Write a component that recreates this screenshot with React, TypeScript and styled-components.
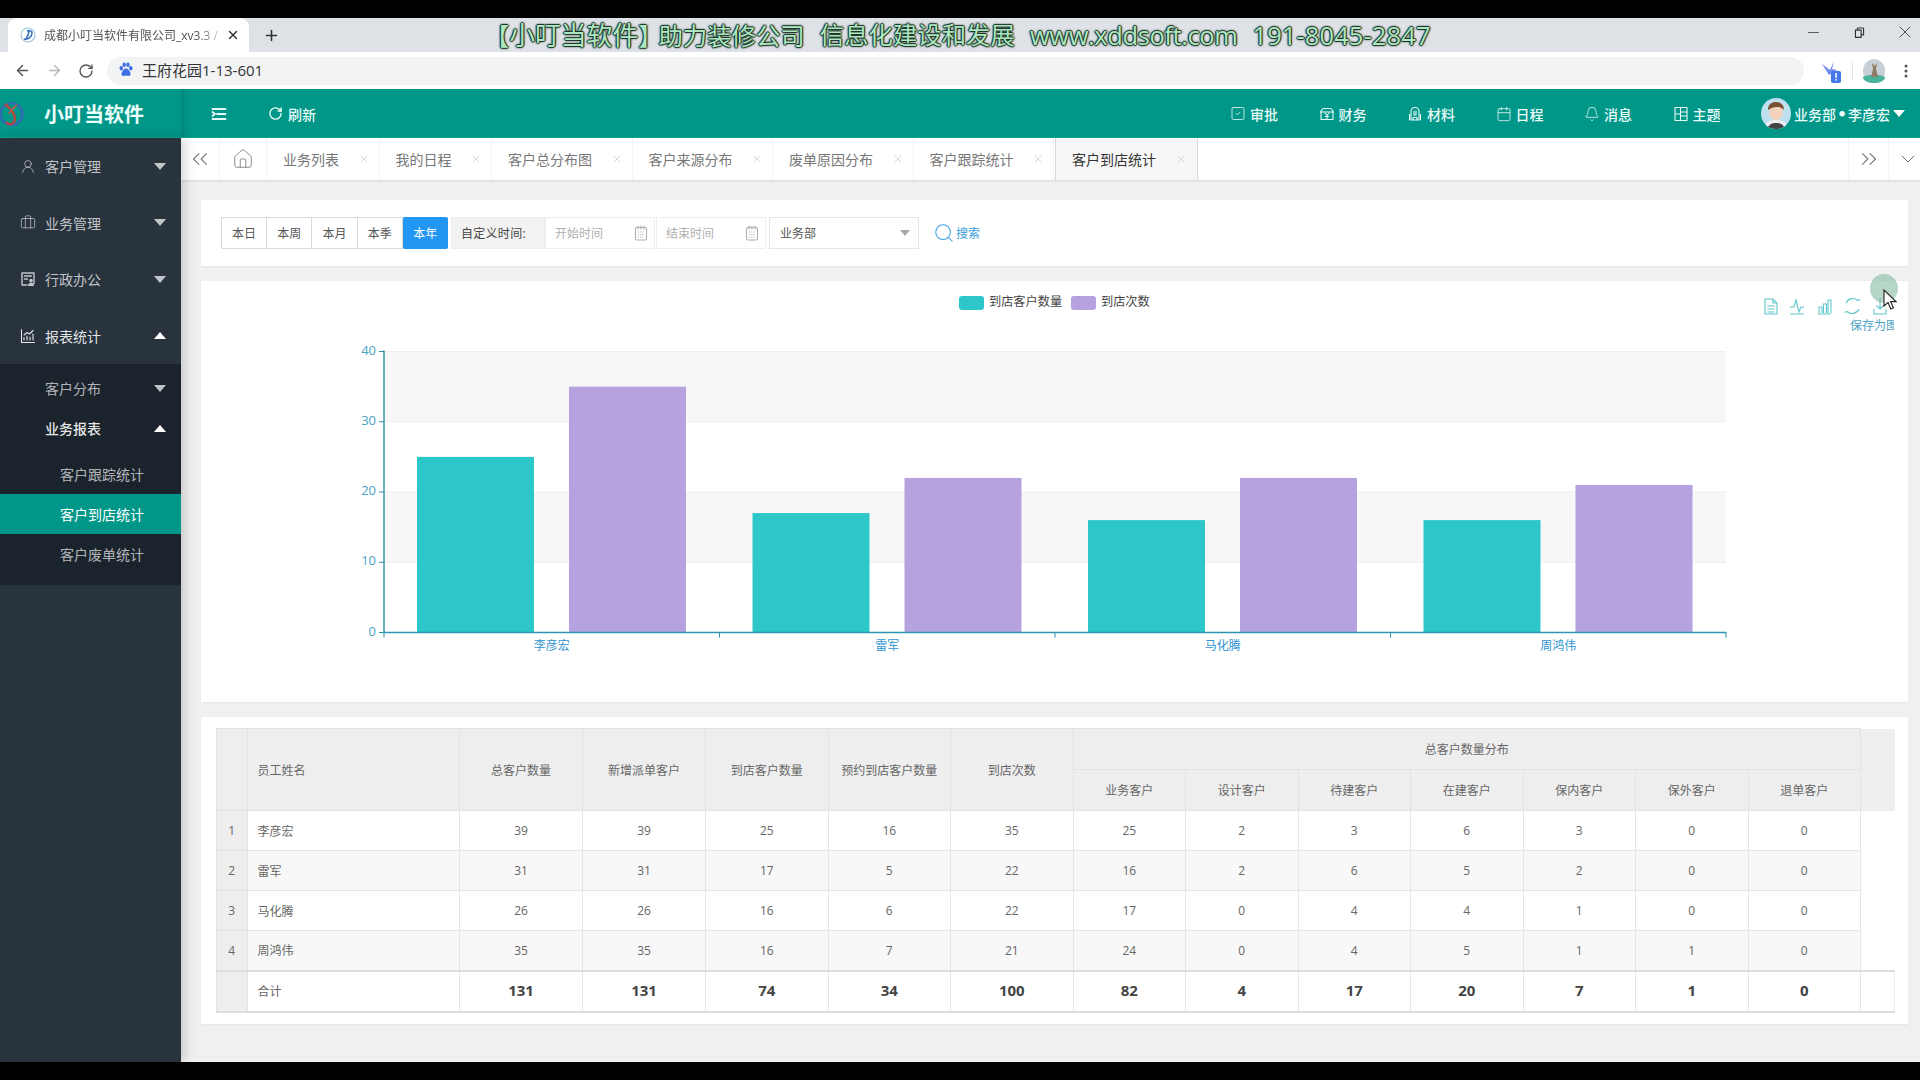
import React from "react";
import styled, { createGlobalStyle } from "styled-components";
import {
  ArrowLeft, ArrowRight, RotateCw, Plus, X, Minus, ChevronsLeft, ChevronsRight, ChevronDown,
  Home, Bell, Calendar, Search, UserRound, Briefcase, SquareCheck,
} from "lucide-react";

const Global = createGlobalStyle`
  html, body { margin: 0; padding: 0; background: #000; }
  body { font-family: "Open Sans", "Noto Sans CJK SC", sans-serif; width: 1920px; height: 1080px; overflow: hidden; }
  * { box-sizing: border-box; }
`;

const Page = styled.div`
  width: 1920px; height: 1080px; padding: 18px 0; background: #000; display: flex; flex-direction: column; overflow: hidden;
`;
const TabStrip = styled.div`
  height: 34px; background: #dee1e6; position: relative; display: flex; align-items: flex-end; padding-left: 8px; flex: none;
`;
const BrowserTab = styled.div`
  width: 241px; height: 34px; background: #fff; border-radius: 9px 9px 0 0; display: flex; align-items: center; padding-left: 12px;
  font-size: 12px; color: #555;
`;
const TabTitle = styled.span`
  width: 176px; margin-left: 8px; white-space: nowrap;
  -webkit-mask-image: linear-gradient(90deg, #000 88%, rgba(0,0,0,.25));
`;
const TabClose = styled.span`
  display: flex; margin-left: 6px; color: #333;
`;
const NewTab = styled.span`
  display: flex; margin-left: 14px; margin-bottom: 8px; color: #333;
`;
const Banner = styled.div`
  position: absolute; left: 497px; top: 2px; display: flex; align-items: center; height: 30px; gap: 15px; white-space: nowrap;
  font-size: 24.4px; line-height: 30px; color: #aee6c2;
  text-shadow: 1px 0 1px #16301f, -1px 0 1px #16301f, 0 1px 1px #16301f, 0 -1px 1px #16301f, 0 0 3px #2b4a38;
`;
const BannerBrand = styled.span`
  font-size: 25.8px;
`;
const BannerBracket = styled.span<{ $after?: boolean }>`
  font-feature-settings: "halt";
  margin-right: ${p => (p.$after ? 8 : 0)}px;
`;
const BannerLatin = styled.span<{ $wide?: boolean }>`
  font-size: 25.5px; font-family: "Open Sans", sans-serif; letter-spacing: ${p => (p.$wide ? "0.1px" : "-0.4px")};
`;
const WindowControls = styled.div`
  position: absolute; right: -8px; top: 6px; display: flex; color: #333;
`;
const WinButton = styled.span`
  width: 46px; height: 16px; display: flex; align-items: center; justify-content: center;
`;
const Toolbar = styled.div`
  height: 37px; background: #fff; display: flex; align-items: center; padding-left: 14px; flex: none; color: #5f6368;
`;
const NavButton = styled.span<{ $dim?: boolean }>`
  width: 32px; display: flex; justify-content: flex-start; color: ${p => (p.$dim ? "#b5b8bd" : "#555")};
`;
const Address = styled.div`
  width: 1697px; height: 28px; border-radius: 14px; background: #f1f3f4; margin-left: -3px; display: flex; align-items: center; gap: 9px; padding: 0 0 2px 12px;
  font-size: 15px; color: #333;
`;
const ToolbarRight = styled.div`
  flex: 1; display: flex; align-items: center; padding-left: 16px; gap: 10px;
`;
const Divider = styled.span`
  width: 1px; height: 20px; background: #e5e5e5;
`;
const MoreWrap = styled.span`
  display: flex; margin-left: 9px;
`;
const Shell = styled.div`
  flex: 1; min-height: 0; display: grid; grid-template-columns: 181px 1fr; grid-template-rows: 49px 1fr; background: #f0f0f0;
`;
const LogoBar = styled.div`
  background: #009688; display: flex; align-items: center; gap: 20px; color: #fff; padding-top: 1px;
  border-bottom: 1px solid #0aa596;
`;
const LogoText = styled.span`
  font-size: 20px; font-weight: 700; white-space: nowrap; color: #eafffb;
`;
const TopBar = styled.div`
  background: #009688; display: flex; align-items: center; color: #e8fbf8; font-size: 14px; padding: 1px 15px 0 30px; font-weight: 500;
  border-bottom: 1px solid #0aa596; box-shadow: inset 8px 0 8px -8px rgba(0,0,0,.18);
`;
const TopLeftItem = styled.span<{ $gap?: number }>`
  display: flex; align-items: center; gap: 5px; margin-right: ${p => p.$gap ?? 0}px;
`;
const TopNav = styled.div`
  margin-left: auto; display: flex; align-items: center; gap: 40.5px;
`;
const TopItem = styled.span`
  display: flex; align-items: center; gap: 4px; white-space: nowrap;
`;
const IconBox = styled.span`
  width: 16px; height: 20px; display: flex; align-items: center; justify-content: center; flex: none;
`;
const UserBox = styled.span`
  display: flex; align-items: center; gap: 3px; white-space: nowrap;
`;
const NameDot = styled.span`
  display: inline-block; width: 6px; text-align: center; font-size: 6px; line-height: 1; vertical-align: 2px;
`;
const CaretBox = styled.span<{ $up?: boolean; $bright?: boolean }>`
  width: 0; height: 0; border-left: 6px solid transparent; border-right: 6px solid transparent;
  ${p => (p.$up ? "border-bottom" : "border-top")}: 7px solid ${p => (p.$bright ? "#fff" : "rgba(255,255,255,.72)")};
  margin-left: auto; flex: none;
`;
const Sidebar = styled.nav`
  background: #28333e; color: rgba(255,255,255,.72); font-size: 14px; position: relative; z-index: 2;
  box-shadow: 4px 0 10px rgba(0,0,0,.16);
`;
const MenuItem = styled.div<{ $open?: boolean }>`
  height: 56.5px; display: flex; align-items: center; gap: 9px; padding: 0 15px 0 20px;
  color: ${p => (p.$open ? "rgba(255,255,255,.88)" : "inherit")};
`;
const SubMenu = styled.div`
  background: #1b232c; padding: 4px 0 11px;
`;
const SubItem = styled.div<{ $open?: boolean }>`
  height: 40px; display: flex; align-items: center; padding: 0 15px 0 45px;
  color: ${p => (p.$open ? "rgba(255,255,255,.9)" : "rgba(255,255,255,.68)")};
  font-weight: ${p => (p.$open ? 500 : 400)};
`;
const Leaf = styled.div<{ $active?: boolean }>`
  height: 40px; display: flex; align-items: center; padding-left: 60px;
  background: ${p => (p.$active ? "#009688" : "transparent")};
  color: ${p => (p.$active ? "#fff" : "rgba(255,255,255,.68)")};
`;
const LeafGroup = styled.div`
  margin-top: 6px;
`;
const Main = styled.main`
  display: flex; flex-direction: column; min-width: 0;
`;
const TabsRow = styled.div`
  height: 42px; background: #fff; display: flex; align-items: stretch; flex: none; color: #777; font-size: 14px;
  box-shadow: 0 1px 2px rgba(0,0,0,.1); position: relative;
`;
const TabIcon = styled.span<{ $w: number }>`
  width: ${p => p.$w}px; display: flex; align-items: center; justify-content: center; border-right: 1px solid #f3f3f3; color: #777; flex: none;
`;
const PageTab = styled.div<{ $active?: boolean }>`
  display: flex; align-items: center; padding: 0 9px 0 16px; gap: 18.5px; white-space: nowrap; flex: none;
  border-right: 1px solid ${p => (p.$active ? "#d8d8d8" : "#f3f3f3")};
  ${p => p.$active && "background: #f7f7f7; color: #333; border-left: 1px solid #d8d8d8; margin-left: 1px; padding-right: 10px;"}
`;
const TabClose2 = styled.span`
  display: flex; color: #c4c4c4;
`;
const TabsEnd = styled.div`
  margin-left: auto; display: flex; align-items: stretch;
`;
const TabEndIcon = styled.span<{ $w: number; $shift?: number }>`
  width: ${p => p.$w}px; display: flex; align-items: center; justify-content: center; border-left: 1px solid #f3f3f3; color: #777;
  padding-left: ${p => p.$shift ?? 0}px;
`;
const Content = styled.div`
  flex: 1; padding: 20px 12px 0 20px; display: flex; flex-direction: column; gap: 15px; min-height: 0;
`;
const Card = styled.section`
  background: #fff; box-shadow: 0 1px 2px rgba(0,0,0,.05);
`;
const FilterCard = styled(Card)`
  height: 66px; padding: 17px 20px; display: flex; align-items: stretch; font-size: 12px; color: #555;
`;
const PeriodGroup = styled.div`
  display: flex; height: 32px; border: 1px solid #d9d9d9; border-radius: 2px; border-right: 0;
`;
const PeriodButton = styled.span<{ $active?: boolean }>`
  width: 45.2px; display: flex; align-items: center; justify-content: center; border-right: 1px solid #d9d9d9;
  ${p => p.$active && "background: #2196f3; color: #fff; margin: -1px 0; border: 0; border-radius: 2px;"}
`;
const FieldLabel = styled.span`
  width: 94px; margin-left: 3px; background: #f2f2f2; display: flex; align-items: center; padding-left: 9px; letter-spacing: .3px; color: #444; border: 1px solid #eee;
`;
const DateField = styled.span`
  width: 110px; border: 1px solid #eee; display: flex; align-items: center; justify-content: space-between; padding: 0 5px 0 9px; color: #b0b0b0; margin-right: 1px;
`;
const SelectField = styled.span`
  width: 150px; margin-left: 2px; border: 1px solid #e6e6e6; display: flex; align-items: center; justify-content: space-between; padding: 0 8px 0 10px; color: #555;
`;
const SelectCaret = styled.span`
  width: 0; height: 0; border-left: 5px solid transparent; border-right: 5px solid transparent; border-top: 6px solid #aaa;
`;
const SearchButton = styled.span`
  margin-left: 14px; display: flex; align-items: center; gap: 1px; color: #3aa0dc;
`;
const ChartCard = styled(Card)`
  height: 421px; position: relative; flex: none;
`;
const ChartSvg = styled.svg`
  display: block; width: 100%; height: 100%;
`;
const PointerHalo = styled.span`
  position: absolute; left: 1669px; top: -7px; width: 28px; height: 29px; border-radius: 50%; background: rgba(110,175,145,.5);
`;
const PointerArrow = styled.svg`
  position: absolute; left: 1682px; top: 8px; width: 14px; height: 22px;
`;
const TableCard = styled(Card)`
  height: 307px; padding: 11px 14px 11px 15px; flex: none;
`;
const Grid = styled.table`
  width: 1678px; table-layout: fixed; border-collapse: collapse; font-size: 12px; color: #666; text-align: center;
`;
const HeadCell = styled.th<{ $left?: boolean; $h?: number }>`
  background: #eee; font-weight: 400; padding: 0; border: 1px solid #e2e2e2; color: #666;
  height: ${p => p.$h ?? 40.5}px; ${p => p.$left && "text-align: left; padding-left: 10px;"}
`;
const Gutter = styled.th`
  background: #eee; border: 0;
`;
const Row = styled.tr<{ $even?: boolean; $total?: boolean }>`
  background: ${p => (p.$even ? "#f8f8f8" : "#fff")};
  ${p => p.$total && "border-top: 2px solid #ddd; border-bottom: 2px solid #ddd;"}
`;
const Cell = styled.td<{ $left?: boolean; $total?: boolean }>`
  height: 40px; padding: 0; border: 1px solid #e6e6e6;
  ${p => p.$left && "text-align: left; padding-left: 10px;"}
  ${p => p.$total && "font-size: 15px; font-weight: 700; color: #444; height: 41.6px; padding-bottom: 3px;"}
`;
const IndexCell = styled.td`
  padding: 0; background: #eee; border: 1px solid #e2e2e2; color: #666;
`;
const BlankCell = styled.td<{ $total?: boolean }>`
  padding: 0; border: 0; background: #fff; ${p => p.$total && "border-right: 1px solid #eee;"}
`;

const Tiny = ({ children, size = 16 }: { children: React.ReactNode; size?: number }) => (
  <svg width={size} height={size} viewBox="0 0 16 16" fill="none" stroke="currentColor" strokeWidth="1.1" strokeLinecap="round" strokeLinejoin="round">{children}</svg>
);

const Logo = () => (
  <svg width="24" height="28" viewBox="0 0 24 28" fill="none">
    <circle cx="11.5" cy="14" r="11" stroke="#3567b5" strokeWidth="2.2" />
    <path d="M5 4c5 4 10 10 10 15s-6 7-9 3" stroke="#b5473f" strokeWidth="2.4" />
    <path d="M17 5c-4 3-7 6-8 9" stroke="#a9624e" strokeWidth="2" />
  </svg>
);
const FavD = () => (
  <svg width="16" height="16" viewBox="0 0 16 16" fill="none">
    <circle cx="8" cy="8" r="7" stroke="#9fc4d8" strokeWidth="1.2" />
    <path d="M6 12c2-3 3-6 3-9M4 12c4 1 8-2 8-6 0-2-2-3-5-2" stroke="#2f6fb5" strokeWidth="1.5" />
  </svg>
);
const Paw = () => (
  <svg width="14" height="16" viewBox="0 0 14 16" fill="#3d6fe0">
    <ellipse cx="2.3" cy="6.2" rx="1.7" ry="2.2" />
    <ellipse cx="5.2" cy="2.8" rx="1.7" ry="2.3" />
    <ellipse cx="9" cy="2.8" rx="1.7" ry="2.3" />
    <ellipse cx="11.8" cy="6.2" rx="1.7" ry="2.2" />
    <path d="M7 6.5c2 0 3 2 4 3.5s.5 4-1.5 4c-1 0-1.5-.4-2.5-.4S5.5 14 4.5 14C2.5 14 2 11.5 3 10s2-3.5 4-3.5z" />
  </svg>
);
const Extension = () => (
  <svg width="22" height="26" viewBox="0 0 22 26">
    <path d="M2 6l8 6 4-9-2 8 5 1-8 5z" fill="#6f8bef" />
    <rect x="11" y="13" width="10" height="12" rx="2" fill="#4477e8" />
    <rect x="15.3" y="15" width="1.5" height="5" fill="#fff" />
    <rect x="15.3" y="21" width="1.5" height="1.6" fill="#fff" />
  </svg>
);
const ProfileDot = () => (
  <svg width="22" height="24" viewBox="0 0 22 24">
    <ellipse cx="11" cy="12" rx="11" ry="12" fill="#c8cfd6" />
    <path d="M0 18c6-3 16-3 22 0 0 4-6 6-11 6S0 22 0 18z" fill="#47b39b" />
    <path d="M9 4l1 6-2 8h7l-2-8 1-6-2 3z" fill="#8c7a62" />
  </svg>
);
const MoreDots = () => (
  <svg width="4" height="14" viewBox="0 0 4 14" fill="#555">
    <circle cx="2" cy="2" r="1.5" /><circle cx="2" cy="7" r="1.5" /><circle cx="2" cy="12" r="1.5" />
  </svg>
);
const Avatar = () => (
  <svg width="30" height="31" viewBox="0 0 30 31">
    <defs><clipPath id="avc"><ellipse cx="15" cy="15.5" rx="15" ry="15.5" /></clipPath></defs>
    <g clipPath="url(#avc)">
      <rect width="30" height="31" fill="#bfe0ee" />
      <path d="M3 31c1-7 6-9 12-9s11 2 12 9z" fill="#eee" />
      <path d="M6 31c2-5 5-6 9-6s7 1 9 6z" fill="#444" />
      <ellipse cx="15" cy="14" rx="7" ry="8" fill="#f3d3bc" />
      <path d="M7 12c0-6 4-8 8-8s8 2 8 8c-2-2-4-3-7-3s-6 1-9 3z" fill="#7a5232" />
    </g>
  </svg>
);

const icons = {
  burger: <Tiny><path d="M1.5 3h13M6 8h8.5M1.5 13h13M1.5 6l2.5 2-2.5 2" strokeWidth="1.8" /></Tiny>,
  money: <Tiny><path d="M2 6V13.5h12V6M1.5 6c1-2 2-3.5 3-3.5h7c1 0 2 1.5 3 3.5z" /><path d="M6 7l2 2.5 2-2.5M8 9.5v3M6.3 10.5h3.4" /></Tiny>,
  material: <Tiny><path d="M4 14V5c0-2 2-3.5 4-3.5S12 3 12 5v9zM2.5 14V8.5M13.5 14V8.5M7 5v4h2V5M6 14v-2.5h4V14" /></Tiny>,
  theme: <Tiny><path d="M2 1.5h12v13H2zM7.5 1.5v13M7.5 6H14M7.5 10H14M2 8h5.5" /></Tiny>,
  office: <Tiny><path d="M2 2h12v10.5M2 2v12h5M4.5 5h7M4.5 8h3" strokeWidth="1.4" /><circle cx="11" cy="9.5" r="1.8" fill="currentColor" stroke="none" /><path d="M8 15c0-2.5 1.5-3.5 3-3.5s3 1 3 3.5z" fill="currentColor" stroke="none" /></Tiny>,
  report: <Tiny><path d="M1.5 1.5V14.5H14.5M4 12V9.5M7 12V8M10 12V9M13 12V6M4 7l3-2.5 2.5 1.5L13 2.5" /></Tiny>,
  cal: <Tiny><path d="M4 2.5h8a1.500 1.500 0 0 1 1.500 1.500v9.500a1.500 1.500 0 0 1-1.500 1.500H4a1.500 1.500 0 0 1-1.500-1.500V4A1.500 1.500 0 0 1 4 2.500zM5 1v3M8 1v3M11 1v3" /><path d="M5 7h6M5 9.5h6M5 12h6" strokeDasharray="1 1.2" strokeLinecap="butt" /></Tiny>,
};

const subNames = ["业务客户", "设计客户", "待建客户", "在建客户", "保内客户", "保外客户", "退单客户"];
const mainNames = ["总客户数量", "新增派单客户", "到店客户数量", "预约到店客户数量", "到店次数"];
const rows = [
  { name: "李彦宏", values: [39, 39, 25, 16, 35, 25, 2, 3, 6, 3, 0, 0] },
  { name: "雷军", values: [31, 31, 17, 5, 22, 16, 2, 6, 5, 2, 0, 0] },
  { name: "马化腾", values: [26, 26, 16, 6, 22, 17, 0, 4, 4, 1, 0, 0] },
  { name: "周鸿伟", values: [35, 35, 16, 7, 21, 24, 0, 4, 5, 1, 1, 0] },
];
const totals = [131, 131, 74, 34, 100, 82, 4, 17, 20, 7, 1, 0];
const colWidths = [30.5, 212.5, 123, 123, 122.5, 122.5, 122.5, 112.5, 112.5, 112.5, 112.5, 112.5, 112.5, 112.5, 34];

const people = ["李彦宏", "雷军", "马化腾", "周鸿伟"];
const visits = [25, 17, 16, 16];
const times = [35, 22, 22, 21];
const AX = 384, AY = 632.5, TOP = 351.5, CAT = 335.5, UNIT = 7.025;

const Chart = () => (
  <ChartSvg viewBox="201 281 1707 421" fontFamily="'Open Sans','Noto Sans CJK SC',sans-serif" fontSize="12">
    <defs><clipPath id="saveClip"><rect x="1845" y="316" width="49" height="20" /></clipPath></defs>
    <rect x="959" y="296" width="25" height="14" rx="3" fill="#2ec7c9" />
    <text x="989" y="305.5" fill="#444" fontSize="12.2">到店客户数量</text>
    <rect x="1071" y="296" width="25" height="14" rx="3" fill="#b6a2de" />
    <text x="1101" y="305.5" fill="#444" fontSize="12.2">到店次数</text>

    <rect x={AX} y={TOP} width="1342" height="70.25" fill="#f7f7f7" />
    <rect x={AX} y={TOP + 140.5} width="1342" height="70.25" fill="#f7f7f7" />
    {[0, 1, 2, 3].map(i => (
      <line key={i} x1={AX} x2="1726" y1={TOP + i * 70.25} y2={TOP + i * 70.25} stroke="#eeeeee" />
    ))}
    {people.map((_, i) => {
      const x = AX + i * CAT;
      return (
        <g key={i}>
          <rect x={x + 33} y={AY - visits[i] * UNIT} width="117" height={visits[i] * UNIT} fill="#2ec7c9" />
          <rect x={x + 185} y={AY - times[i] * UNIT} width="117" height={times[i] * UNIT} fill="#b6a2de" />
        </g>
      );
    })}
    <line x1={AX} x2={AX} y1={TOP - 1} y2={AY} stroke="#2f8fa8" strokeWidth="1.4" />
    <line x1={AX} x2="1726.5" y1={AY} y2={AY} stroke="#2f93b5" strokeWidth="1.4" />
    {[40, 30, 20, 10, 0].map((v, i) => (
      <g key={v}>
        <line x1="379" x2={AX} y1={TOP + i * 70.25} y2={TOP + i * 70.25} stroke="#2f8fa8" />
        <text x="376" y={TOP + 3 + i * 70.25} textAnchor="end" fontSize="13" fill="#4aa2c6">{v}</text>
      </g>
    ))}
    {[0, 1, 2, 3, 4].map(i => (
      <line key={i} x1={AX + i * CAT} x2={AX + i * CAT} y1={AY} y2={AY + 5} stroke="#2f8fa8" />
    ))}
    {people.map((p, i) => (
      <text key={p} x={AX + (i + 0.5) * CAT} y="649.5" textAnchor="middle" fill="#2f93d0">{p}</text>
    ))}

    <g fill="none" stroke="#5fc8cb" strokeWidth="1.1">
      <path d="M1765 299h8l4 4v11h-12zM1773 299v4h4M1767.5 306h7M1767.5 309h7M1767.5 312h7" />
      <path d="M1790 307h4l2-7 3 12 2-5h3M1790 314h14" />
      <path d="M1818 314h13M1819 313v-6h3v6M1823.5 313v-9h3v9M1828 313v-13h3v13" />
      <path d="M1846 303a7.5 7.5 0 0 1 12-2.5l2-1M1859 309a7.5 7.5 0 0 1-12 2.5l-2 1" />
      <path d="M1874 309v5h12v-5M1880 298v11M1876.5 305.5l3.5 3.5 3.5-3.5" />
    </g>
    <text x="1850" y="330" fill="#4aa2c6" clipPath="url(#saveClip)">保存为图</text>
  </ChartSvg>
);

const pageTabs = ["业务列表", "我的日程", "客户总分布图", "客户来源分布", "废单原因分布", "客户跟踪统计"];

export default function App() {
  return (
    <>
      <Global />
      <Page>
        <TabStrip>
          <BrowserTab>
            <FavD />
            <TabTitle>成都小叮当软件有限公司_xv3.3 /</TabTitle>
            <TabClose><X size={14} strokeWidth={2.4} /></TabClose>
          </BrowserTab>
          <NewTab><Plus size={17} strokeWidth={2.2} /></NewTab>
          <Banner>
            <span>
              <BannerBracket>【</BannerBracket>
              <BannerBrand>小叮当软件</BannerBrand>
              <BannerBracket $after>】</BannerBracket>助力装修公司
            </span>
            <span>信息化建设和发展</span>
            <BannerLatin>www.xddsoft.com</BannerLatin>
            <BannerLatin $wide>191-8045-2847</BannerLatin>
          </Banner>
          <WindowControls>
            <WinButton><Minus size={17} strokeWidth={1.1} /></WinButton>
            <WinButton>
              <Tiny size={13}><path d="M3 5h7v9H3zM5.5 5V2.5H13V11h-3" strokeWidth="1.4" /></Tiny>
            </WinButton>
            <WinButton><X size={20} strokeWidth={1} /></WinButton>
          </WindowControls>
        </TabStrip>
        <Toolbar>
          <NavButton><ArrowLeft size={17} strokeWidth={2} /></NavButton>
          <NavButton $dim><ArrowRight size={17} strokeWidth={2} /></NavButton>
          <NavButton><RotateCw size={16} strokeWidth={2} /></NavButton>
          <Address><Paw />王府花园1-13-601</Address>
          <ToolbarRight>
            <Extension />
            <Divider />
            <ProfileDot />
            <MoreWrap><MoreDots /></MoreWrap>
          </ToolbarRight>
        </Toolbar>
        <Shell>
          <LogoBar><Logo /><LogoText>小叮当软件</LogoText></LogoBar>
          <TopBar>
            <TopLeftItem $gap={41}>{icons.burger}</TopLeftItem>
            <TopLeftItem><RotateCw size={15} strokeWidth={2.2} />刷新</TopLeftItem>
            <TopNav>
              <TopItem><IconBox><SquareCheck size={19} strokeWidth={1.2} /></IconBox>审批</TopItem>
              <TopItem><IconBox>{icons.money}</IconBox>财务</TopItem>
              <TopItem><IconBox>{icons.material}</IconBox>材料</TopItem>
              <TopItem><IconBox><Calendar size={18} strokeWidth={1.2} /></IconBox>日程</TopItem>
              <TopItem><IconBox><Bell size={18} strokeWidth={1.2} /></IconBox>消息</TopItem>
              <TopItem><IconBox>{icons.theme}</IconBox>主题</TopItem>
              <UserBox><Avatar />业务部<NameDot>●</NameDot>李彦宏<CaretBox $bright /></UserBox>
            </TopNav>
          </TopBar>
          <Sidebar>
            <MenuItem><IconBox><UserRound size={19} strokeWidth={1.1} /></IconBox>客户管理<CaretBox /></MenuItem>
            <MenuItem><IconBox><Briefcase size={19} strokeWidth={1.1} /></IconBox>业务管理<CaretBox /></MenuItem>
            <MenuItem><IconBox>{icons.office}</IconBox>行政办公<CaretBox /></MenuItem>
            <MenuItem $open><IconBox>{icons.report}</IconBox>报表统计<CaretBox $up $bright /></MenuItem>
            <SubMenu>
              <SubItem>客户分布<CaretBox /></SubItem>
              <SubItem $open>业务报表<CaretBox $up $bright /></SubItem>
              <LeafGroup>
                <Leaf>客户跟踪统计</Leaf>
                <Leaf $active>客户到店统计</Leaf>
                <Leaf>客户废单统计</Leaf>
              </LeafGroup>
            </SubMenu>
          </Sidebar>
          <Main>
            <TabsRow>
              <TabIcon $w={39}><ChevronsLeft size={26} strokeWidth={1} /></TabIcon>
              <TabIcon $w={47}><Home size={22} strokeWidth={0.9} /></TabIcon>
              {pageTabs.map(t => (
                <PageTab key={t}>{t}<TabClose2><X size={12} strokeWidth={1.3} /></TabClose2></PageTab>
              ))}
              <PageTab $active>客户到店统计<TabClose2><X size={12} strokeWidth={1.3} /></TabClose2></PageTab>
              <TabsEnd>
                <TabEndIcon $w={40}><ChevronsRight size={26} strokeWidth={1} /></TabEndIcon>
                <TabEndIcon $w={32} $shift={7}><ChevronDown size={26} strokeWidth={1} /></TabEndIcon>
              </TabsEnd>
            </TabsRow>
            <Content>
              <FilterCard>
                <PeriodGroup>
                  <PeriodButton>本日</PeriodButton>
                  <PeriodButton>本周</PeriodButton>
                  <PeriodButton>本月</PeriodButton>
                  <PeriodButton>本季</PeriodButton>
                  <PeriodButton $active>本年</PeriodButton>
                </PeriodGroup>
                <FieldLabel>自定义时间:</FieldLabel>
                <DateField>开始时间{icons.cal}</DateField>
                <DateField>结束时间{icons.cal}</DateField>
                <SelectField>业务部<SelectCaret /></SelectField>
                <SearchButton><Search size={22} strokeWidth={1.1} />搜索</SearchButton>
              </FilterCard>
              <ChartCard>
                <Chart />
                <PointerHalo />
                <PointerArrow viewBox="0 0 14 22">
                  <path d="M1 1v16l4-3.5 2.8 6.5 2.6-1.2-2.8-6.2h5.4z" fill="#fff" stroke="#222" strokeWidth="1.1" />
                </PointerArrow>
              </ChartCard>
              <TableCard>
                <Grid>
                  <colgroup>
                    {colWidths.map((w, i) => <col key={i} style={{ width: w }} />)}
                  </colgroup>
                  <thead>
                    <tr>
                      <HeadCell rowSpan={2} />
                      <HeadCell rowSpan={2} $left>员工姓名</HeadCell>
                      {mainNames.map(n => <HeadCell key={n} rowSpan={2}>{n}</HeadCell>)}
                      <HeadCell colSpan={7}>总客户数量分布</HeadCell>
                      <Gutter rowSpan={2} />
                    </tr>
                    <tr>
                      {subNames.map(n => <HeadCell key={n} $h={41.5}>{n}</HeadCell>)}
                    </tr>
                  </thead>
                  <tbody>
                    {rows.map((r, i) => (
                      <Row key={r.name} $even={i % 2 === 1}>
                        <IndexCell>{i + 1}</IndexCell>
                        <Cell $left>{r.name}</Cell>
                        {r.values.map((v, j) => <Cell key={j}>{v}</Cell>)}
                        <BlankCell />
                      </Row>
                    ))}
                    <Row $total>
                      <IndexCell />
                      <Cell $left>合计</Cell>
                      {totals.map((v, j) => <Cell key={j} $total>{v}</Cell>)}
                      <BlankCell $total />
                    </Row>
                  </tbody>
                </Grid>
              </TableCard>
            </Content>
          </Main>
        </Shell>
      </Page>
    </>
  );
}
